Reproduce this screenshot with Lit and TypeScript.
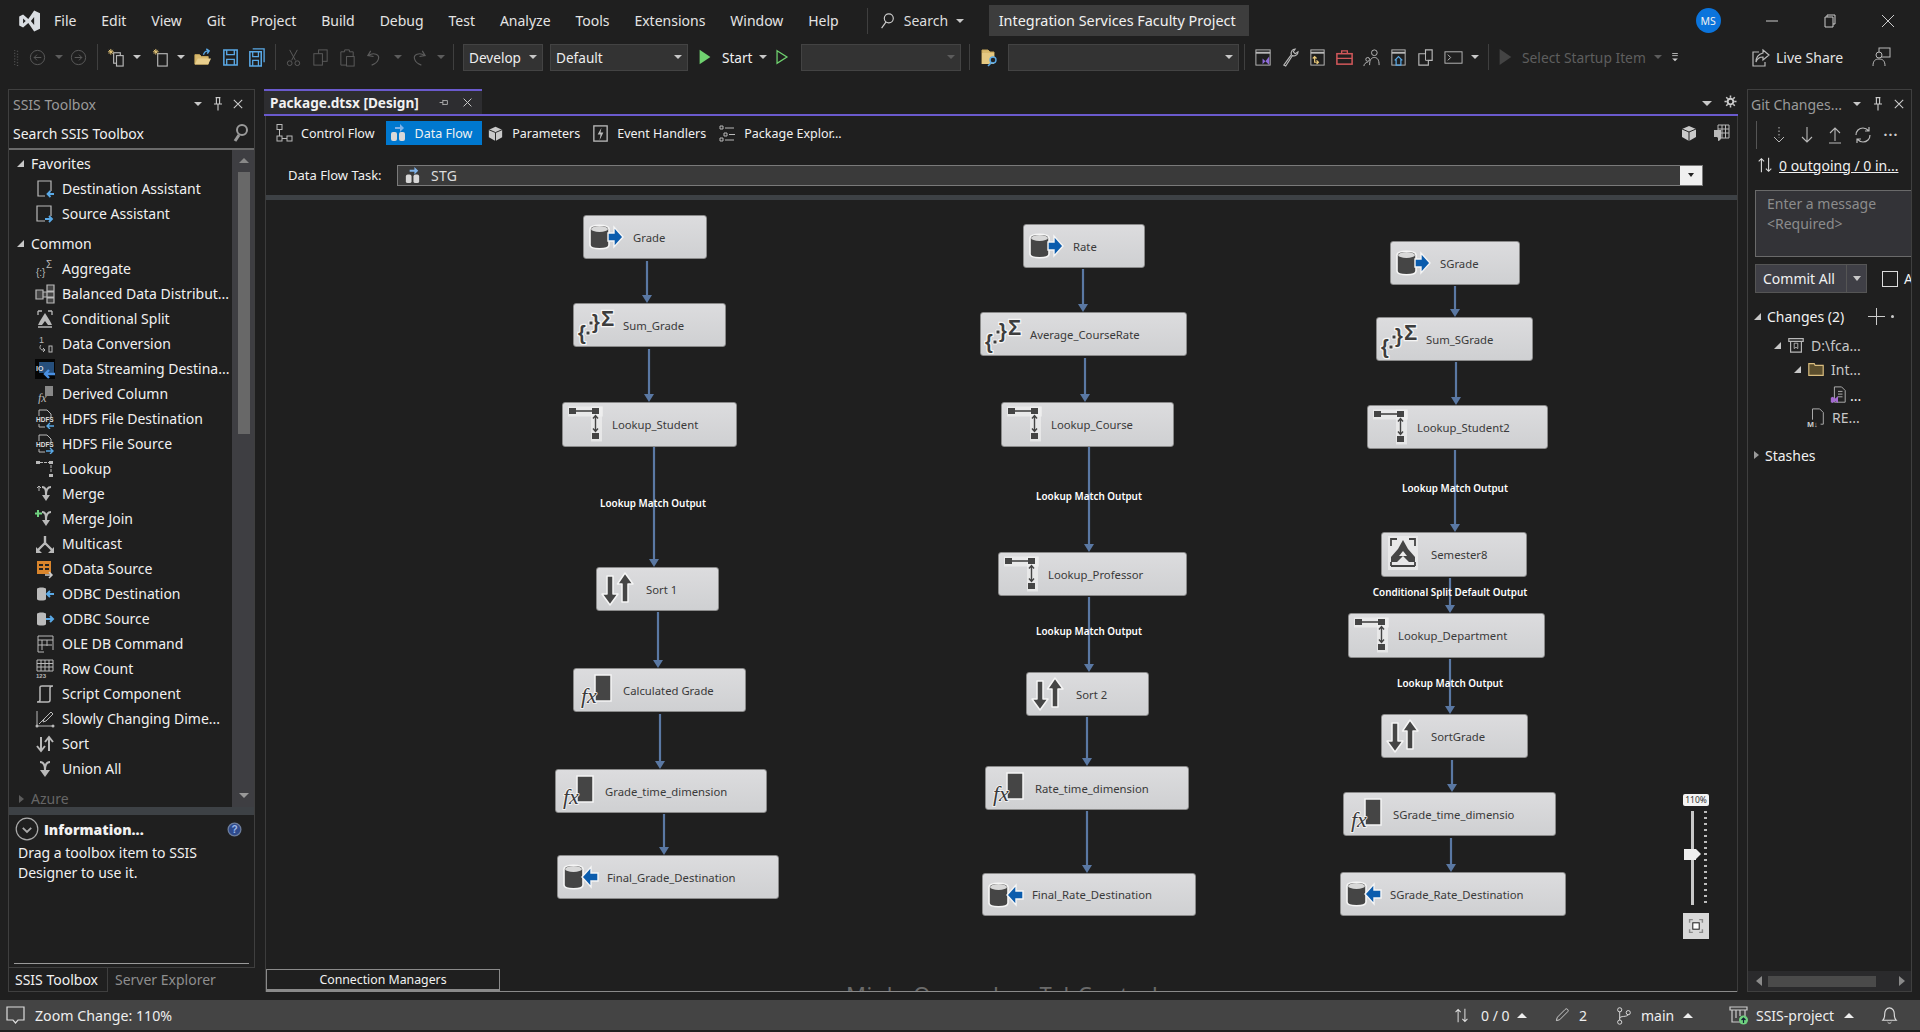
import { LitElement, html, css, svg } from 'lit';
import { customElement } from 'lit/decorators.js';

const G = '#b9b9b9';
const D = '#5c5c5c';
const BLUE = '#5aa9e6';

const icons: Record<string, any> = {
  grip: svg`<path d="M7 2v16M10 3v16" stroke="#555" stroke-width="1.4" stroke-dasharray="1 2" fill="none"/>`,
  back: svg`<circle cx="10" cy="10" r="7.5" fill="none" stroke="${D}"/><path d="M14 10H6.5M9.5 7l-3 3 3 3" fill="none" stroke="${D}"/>`,
  fwd: svg`<circle cx="10" cy="10" r="7.5" fill="none" stroke="${D}"/><path d="M6 10h7.5M10.5 7l3 3-3 3" fill="none" stroke="${D}"/>`,
  newproj: svg`<rect x="7" y="5" width="7" height="11" fill="none" stroke="${G}" stroke-width="1.2"/><rect x="10" y="8" width="7" height="11" fill="#222" stroke="${G}" stroke-width="1.2"/><path d="M4 1v6M1 4h6M2 2l4 4M6 2 2 6" stroke="#e8c878" stroke-width="1"/>`,
  newfile: svg`<rect x="6" y="6" width="10" height="13" fill="none" stroke="${G}" stroke-width="1.2"/><path d="M4 1v6M1 4h6M2 2l4 4M6 2 2 6" stroke="#e8c878" stroke-width="1"/>`,
  open: svg`<path d="M2 17V7h5l2 2h7v8z" fill="#d8b96e" stroke="#c9a95c"/><path d="M2 17l3-6h14l-3 6z" fill="#e9cf8d"/><path d="M11 7c1-3 3-4 5-4M14 1l3 2-2 3" fill="none" stroke="${BLUE}" stroke-width="1.5"/>`,
  save: svg`<path d="M3 2h14v16H3z" fill="none" stroke="${BLUE}" stroke-width="1.6"/><path d="M6 2v5h8V2M6 18v-6h8v6" fill="none" stroke="${BLUE}" stroke-width="1.4"/>`,
  saveall: svg`<path d="M6 1h12v14" fill="none" stroke="${BLUE}" stroke-width="1.4"/><path d="M3 4h12v15H3z" fill="none" stroke="${BLUE}" stroke-width="1.6"/><path d="M6 4v5h6V4M6 19v-6h6v6" fill="none" stroke="${BLUE}" stroke-width="1.3"/>`,
  cut: svg`<path d="M6 2l6 11M14 2 8 13" stroke="${D}" fill="none"/><circle cx="6" cy="16" r="2.5" fill="none" stroke="${D}"/><circle cx="14" cy="16" r="2.5" fill="none" stroke="${D}"/>`,
  copy: svg`<rect x="8" y="2" width="9" height="12" fill="none" stroke="${D}"/><rect x="3" y="6" width="9" height="12" fill="#1f1f1f" stroke="${D}"/>`,
  paste: svg`<path d="M3 4h4V2h5v2h4v5M3 4v14h6" fill="none" stroke="${D}"/><rect x="9" y="9" width="8" height="10" fill="none" stroke="${D}"/>`,
  undo: svg`<path d="M6 3 3 8l6 1M3.5 8C9 4 16 7 14 12c-1 3-4 5-7 6" fill="none" stroke="${D}" stroke-width="1.2"/>`,
  redo: svg`<path d="M14 3l3 5-6 1M16.500 8C11 4 4 7 6 12c1 3 4 5 7 6" fill="none" stroke="${D}" stroke-width="1.2"/>`,
  play: svg`<path d="M4 2l12 8-12 8z" fill="#6fd26f"/>`,
  playo: svg`<path d="M4.500 3l11 7-11 7z" fill="none" stroke="#6fd26f" stroke-width="1.4"/>`,
  playd: svg`<path d="M4 1l13 9-13 9z" fill="#444"/>`,
  findfolder: svg`<path d="M2 17V3h6l2 2h4v6" fill="#d8b96e" stroke="#c9a95c"/><rect x="2" y="6" width="12" height="11" fill="#e4c882"/><circle cx="13" cy="13" r="3" fill="#222" stroke="${BLUE}" stroke-width="1.4"/><path d="M11 16l-3 3" stroke="${BLUE}" stroke-width="1.6"/>`,
  win1: svg`<rect x="2" y="2" width="15" height="16" fill="none" stroke="${G}"/><path d="M2 5h15" stroke="${G}" stroke-width="2"/><path d="M9 11l3 3 4-5v9l-4-4-3 3z" fill="#8e6bd8"/>`,
  wrench: svg`<path d="M4 18 12 7c-1-3 1-6 4-6l-2 3 2 2 3-2c0 3-3 5-6 4l-7 11z" fill="none" stroke="${G}" stroke-width="1.2"/>`,
  win2: svg`<rect x="3" y="2" width="14" height="16" fill="none" stroke="${G}"/><path d="M3 5h14" stroke="${G}" stroke-width="2"/><path d="M7 9v6h4M5 11l2-2 2 2M9 13l2 2-2 2" fill="none" stroke="#e8c878" stroke-width="1.3"/>`,
  toolbox: svg`<rect x="2" y="6" width="16" height="11" fill="none" stroke="#d0575a" stroke-width="1.6"/><path d="M7 6V3h6v3M2 11h16" fill="none" stroke="#d0575a" stroke-width="1.4"/>`,
  person: svg`<circle cx="13" cy="5" r="3" fill="none" stroke="${G}"/><path d="M8 18c0-6 2-8 5-8s5 2 5 8" fill="none" stroke="${G}"/><circle cx="6" cy="12" r="2" fill="none" stroke="${G}"/><path d="M2 19c0-2 2-4 4-4" fill="none" stroke="${G}"/>`,
  win3: svg`<rect x="3" y="2" width="14" height="16" fill="none" stroke="${G}"/><path d="M3 5h14" stroke="${G}" stroke-width="2"/><path d="M6 13l4-4 4 4M7.500 12v6h5v-6" fill="none" stroke="${BLUE}" stroke-width="1.3"/>`,
  multi: svg`<path d="M10 2h7v11h-4v5H3V6h7z" fill="none" stroke="${G}" stroke-width="1.2"/><path d="M10 2v11h3" fill="none" stroke="${G}"/>`,
  term: svg`<rect x="1" y="4" width="18" height="12" fill="none" stroke="${G}"/><path d="M4 7l3 3-3 3" fill="none" stroke="${G}"/>`,
  overflow: svg`<path d="M6 5h8M6 8h8" stroke="#ccc" stroke-width="1.2"/><path d="M6 12h8l-4 4z" fill="#ccc"/>`,
  liveshare: svg`<path d="M13 3l6 5-6 5v-3c-4 0-6 2-7 5 0-5 3-8 7-9z" fill="none" stroke="${G}" stroke-width="1.2"/><path d="M9 5H3v14h12v-4" fill="none" stroke="${G}" stroke-width="1.2"/>`,
  feedback: svg`<rect x="8" y="1" width="11" height="9" fill="none" stroke="${G}"/><circle cx="8" cy="8" r="3" fill="#1f1f1f" stroke="${G}"/><path d="M2 19c0-5 2-7 6-7s6 2 6 7" fill="none" stroke="${G}"/>`,
  pin: svg`<path d="M7 2h6M8 2v8h4V2M5 10h10M10 10v8" fill="none" stroke="#ccc" stroke-width="1.4"/>`,
  pinh: svg`<path d="M4 10h5M9 6v8M9 7h7v6H9" fill="none" stroke="#bbb" stroke-width="1.3"/>`,
  x: svg`<path d="M4 4l12 12M16 4 4 16" stroke="#ccc" stroke-width="1.5"/>`,
  mag: svg`<circle cx="12" cy="7" r="5" fill="none" stroke="#9a9a9a" stroke-width="2"/><path d="M9 12l-4 6" stroke="#9a9a9a" stroke-width="3"/>`,
  searchi: svg`<circle cx="12" cy="7" r="5" fill="none" stroke="#ccc" stroke-width="1.3"/><path d="M9 11l-5 7" stroke="#ccc" stroke-width="1.3"/>`,
  gear: svg`<circle cx="10" cy="10" r="3.800" fill="none" stroke="#ccc" stroke-width="2.600"/><path d="M10 2v3M10 15v3M2 10h3M15 10h3M4.300 4.300l2 2M13.700 13.700l2 2M15.700 4.300l-2 2M6.300 13.700l-2 2" stroke="#ccc" stroke-width="2"/>`,
  cflow: svg`<rect x="3" y="1.500" width="5" height="5" fill="none" stroke="${G}"/><rect x="3" y="13" width="5" height="5" fill="none" stroke="${G}"/><rect x="13" y="13" width="5" height="5" fill="none" stroke="${G}"/><path d="M5.500 7v6M8 15.500h5" stroke="${G}"/>`,
  dflow: svg`<rect x="3" y="9" width="6" height="9" rx="2" fill="#d8d8d8"/><rect x="11" y="9" width="6" height="9" rx="2" fill="#d8d8d8"/><path d="M7 6h5V3l4 4-4 4V8H7z" fill="#7fb2e8" transform="translate(0 -2)"/>`,
  params: svg`<path d="M10 3l7 3v8l-7 4-7-4V6z" fill="#c9c9c9"/><path d="M3 6l7 3 7-3M10 9v9" fill="none" stroke="#222"/>`,
  ehandler: svg`<rect x="3" y="2" width="14" height="16" fill="none" stroke="${G}" stroke-width="1.4"/><path d="M11 4 7 11h3l-1 6 4-8h-3z" fill="${G}"/>`,
  pexplore: svg`<path d="M3 3h3v3H3zM8 5h9M7 10h3v3H7zM12 11.500h6M3 15h3v3H3zM8 17h9" stroke="${G}" fill="none"/>`,
  gridf: svg`<path d="M7 2h11v13H7zM7 6h11M7 10h11M11 2v13M14.500 2v13" fill="none" stroke="${G}"/><path d="M3 7h7v8c0 2-2 3-3 3v-4H3z" fill="${G}"/>`,
  fetch: svg`<path d="M10 2v11" stroke="${G}" stroke-dasharray="1.500 2"/><path d="M5 12l5 5 5-5" fill="none" stroke="${G}"/>`,
  pull: svg`<path d="M10 2v15M5 12l5 5 5-5" fill="none" stroke="${G}" stroke-width="1.100"/>`,
  push: svg`<path d="M10 16V3M5 8l5-5 5 5M4 18h12" fill="none" stroke="${G}" stroke-width="1.100"/>`,
  sync: svg`<path d="M3 10c0-4 3-7 7-7 2 0 4 1 6 3M17 10c0 4-3 7-7 7-2 0-4-1-6-3M16 2v4h-4M4 18v-4h4" fill="none" stroke="${G}" stroke-width="1.200"/>`,
  arrows: svg`<path d="M6 18V3M3 6l3-3 3 3M14 2v15M11 14l3 3 3-3" fill="none" stroke="#ddd" stroke-width="1.200"/>`,
  repo: svg`<path d="M2 3h16v3H2zM4 6v12h12V6" fill="none" stroke="${G}" stroke-width="1.300"/><path d="M8 8h4v6l-2-1.500L8 14z" fill="none" stroke="${G}"/>`,
  folder: svg`<path d="M2 17V4h6l1 2h9v11z" fill="#5b4e2d" stroke="#d9bd7f" stroke-width="1.300"/>`,
  vsfile: svg`<path d="M6 1h8l4 4v13H6z" fill="#222" stroke="${G}"/><path d="M10 6h5M10 9h5M10 12h5" stroke="${G}"/><path d="M2 13l2-1 3 2 3-3v8l-3-2-3 2-2-1z" fill="#a36bd0"/>`,
  mdfile: svg`<path d="M5 13V1h8l4 4v13h-3" fill="none" stroke="${G}"/>`,
  comment: svg`<path d="M2 2h17v13h-6l-2.500 3L8 15H2z" fill="none" stroke="#ddd" stroke-width="1.200"/>`,
  pencil: svg`<path d="M3 17l1-4L14 3c1-1 2-1 3 0s1 2 0 3L7 16z" fill="none" stroke="#ddd" stroke-width="1.100"/>`,
  branch: svg`<circle cx="6" cy="4" r="2.200" fill="none" stroke="#ddd"/><circle cx="6" cy="17" r="2.200" fill="none" stroke="#ddd"/><circle cx="15" cy="7" r="2.200" fill="none" stroke="#ddd"/><path d="M6 6v9M6 13c0-3 8-1 9-4" fill="none" stroke="#ddd"/>`,
  repoup: svg`<path d="M1 2h17v3H1zM3 5v12h9M16 5v6M7 5v8M11 5v6" fill="none" stroke="#ccc" stroke-width="1.200"/><circle cx="14.500" cy="15" r="4.500" fill="#6fd27f"/><path d="M14.500 18v-5M12.500 15l2-2 2 2" fill="none" stroke="#123" stroke-width="1.200"/>`,
  bell: svg`<path d="M3 15c2-2 2-4 2-7 0-3 2-6 5-6s5 3 5 6c0 3 0 5 2 7z" fill="none" stroke="#ddd" stroke-width="1.200"/><path d="M8 17c1 1.500 3 1.500 4 0" fill="none" stroke="#ddd"/>`,
  info: svg`<circle cx="10" cy="10" r="7.500" fill="#2e4a8c" stroke="#6c7d9c" stroke-width="1.500"/><text x="10" y="14.500" font-size="12" font-weight="700" text-anchor="middle" fill="#9db8e8" font-family="Liberation Sans">?</text>`,
  chevcircle: svg`<circle cx="10" cy="10" r="9" fill="none" stroke="#aaa" stroke-width="1"/><path d="M6.500 9l3.500 3.500L13.500 9" fill="none" stroke="#aaa" stroke-width="1.500"/>`,
  vslogo: svg`<path d="M4 6.500 7 5l4 3.500L15.500 2 20 4v12l-4.500 2L11 11.500 7 15l-3-1.500zM7 8v4l2-2zM15.500 7 13 10l2.500 3z" fill="#d9dde2" fill-rule="evenodd"/>`,
  fit: svg`<path d="M2 6V2h4M14 2h4v4M18 14v4h-4M6 18H2v-4" fill="none" stroke="#8a8a8a" stroke-width="1.800"/><rect x="6" y="6" width="8" height="8" fill="#fff" stroke="#222" stroke-width="1.300"/>`,
  // toolbox
  tDest: svg`<path d="M10 17H3V2h13v10" fill="none" stroke="${G}" stroke-width="1.200"/><path d="M19 15h-6M15.500 12l-3 3 3 3" fill="none" stroke="${BLUE}" stroke-width="1.800"/>`,
  tSrc: svg`<path d="M10 17H2V2h14v10" fill="none" stroke="${G}" stroke-width="1.200"/><path d="M10 15h7M14 12l3 3-3 3" fill="none" stroke="${BLUE}" stroke-width="1.800"/>`,
  tAgg: svg`<text x="1" y="17" font-size="10" fill="${G}" font-family="Liberation Sans">{:}</text><text x="11" y="9" font-size="10" fill="${G}" font-family="Liberation Sans">Σ</text>`,
  tBal: svg`<path d="M1 6h7v9H1zM8 8h4v5H8zM12 1h7v6h-7zM12 8h7v5h-7zM12 14h7v5h-7z" fill="#444" stroke="${G}" stroke-width="1.200"/>`,
  tSplit: svg`<path d="M3 2h4M13 2h4M3 2v4M17 2v4M3 18h14" fill="none" stroke="${G}" stroke-width="1.300"/><path d="M10 4l5 8 2 4h-4l-3-4-3 4H3l2-4z" fill="${G}"/>`,
  tConv: svg`<text x="4" y="9" font-size="9" fill="${G}" font-family="Liberation Sans">1</text><path d="M6 11c-2 2-1 5 2 5h2M8 14l2 2-2 2" fill="none" stroke="${G}"/><rect x="14" y="12" width="3" height="6" fill="none" stroke="${G}"/>`,
  tStream: svg`<rect width="20" height="20" fill="#050505"/><rect x="4" y="3" width="15" height="11" fill="#264f7c"/><text x="1" y="12" font-size="7" font-weight="700" fill="#ddd" font-family="Liberation Sans">IO</text><path d="M20 15h-9M14 11l-4 4 4 4" fill="none" stroke="#4a90e2" stroke-width="2.400"/>`,
  tDer: svg`<rect x="10" y="2" width="8" height="10" fill="#888"/><text x="3" y="18" font-size="12" font-style="italic" fill="${G}" font-family="Liberation Serif">fx</text>`,
  tHdfsD: svg`<path d="M4 7V1h8l4 4v3" fill="none" stroke="${G}"/><text x="1" y="13" font-size="6.500" font-weight="700" fill="#ddd" font-family="Liberation Sans">HDFS</text><path d="M4 15v3h6" fill="none" stroke="${G}"/><path d="M19 17h-7M15 14l-3 3 3 3" fill="none" stroke="${BLUE}" stroke-width="1.400"/>`,
  tHdfsS: svg`<path d="M4 7V1h8l4 4v3" fill="none" stroke="${G}"/><text x="1" y="13" font-size="6.500" font-weight="700" fill="#ddd" font-family="Liberation Sans">HDFS</text><path d="M4 15v3h6" fill="none" stroke="${G}"/><path d="M11 17h7M15 14l3 3-3 3" fill="none" stroke="${BLUE}" stroke-width="1.400"/>`,
  tLook: svg`<rect x="1" y="2" width="4" height="3" fill="${G}"/><rect x="14" y="2" width="4" height="3" fill="${G}"/><path d="M5 3.500h9M16 6v8" stroke="${G}" stroke-dasharray="3 1"/><rect x="14" y="15" width="4" height="3" fill="${G}"/>`,
  tMerge: svg`<path d="M3 2v5M5 4l-2-2-2 2" transform="translate(1 0)" fill="none" stroke="${G}"/><path d="M7 3c4 0 4 4 4 8M16 3c-4 0-5 4-5 8" fill="none" stroke="${G}" stroke-width="2"/><path d="M7 11h8l-4 6z" fill="${G}"/>`,
  tJoin: svg`<path d="M3 1v7M0 4.500h7" stroke="#6fd27f" stroke-width="2"/><path d="M7 3c4 0 4 4 4 8M16 3c-4 0-5 4-5 8" fill="none" stroke="${G}" stroke-width="2"/><path d="M7 11h8l-4 6z" fill="${G}"/>`,
  tMulti: svg`<path d="M10 2v9M10 9 3 16M10 9l7 7" fill="none" stroke="${G}" stroke-width="2.400"/><path d="M1 13v6h6zM19 13v6h-6z" fill="${G}"/>`,
  tOData: svg`<path d="M2 2h14v13H2z" fill="#d9852c"/><path d="M4 5h4v2H4zM10 5h4v2h-4zM4 9h4v2H4zM10 9h4v2h-4z" fill="#222"/><path d="M10 16h7M14 13l3 3-3 3" fill="none" stroke="#ccc" stroke-width="1.500"/>`,
  tOdbcD: svg`<path d="M2 5c0-2 9-2 9 0v10c0 2-9 2-9 0z" fill="#bbb"/><path d="M19 10h-7M15 7l-3 3 3 3" fill="none" stroke="${BLUE}" stroke-width="2"/>`,
  tOdbcS: svg`<path d="M2 5c0-2 9-2 9 0v10c0 2-9 2-9 0z" fill="#bbb"/><path d="M11 10h7M15 7l3 3-3 3" fill="none" stroke="${BLUE}" stroke-width="2"/>`,
  tOle: svg`<path d="M3 2h15v14M3 2v16h6M3 6h15M7 6v10M12 6v6M3 11h14" fill="none" stroke="${G}"/>`,
  tRow: svg`<path d="M2 1h16v11H2zM2 4.500h16M2 8h16M6 1v11M10 1v11M14 1v11" fill="none" stroke="${G}"/><text x="1" y="19" font-size="6" font-weight="700" fill="${G}" font-family="Liberation Sans">123</text>`,
  tScript: svg`<path d="M5 16V3c0-1 1-1 2-1h11c-2 0-3 1-3 2v12c0 1-1 2-2 2H2c2 0 3-1 3-2z" fill="none" stroke="${G}" stroke-width="1.500"/>`,
  tScd: svg`<path d="M2 2v15h16" fill="none" stroke="${G}"/><circle cx="2" cy="17" r="1.500" fill="${G}"/><circle cx="18" cy="17" r="1.500" fill="${G}"/><path d="M4 15l5-5M9 10l7-7 2 2-7 7-3 1z" fill="none" stroke="${G}"/>`,
  tSort: svg`<path d="M6 3v13M2 12l4 5 4-5M14 17V4M10 8l4-5 4 5" fill="none" stroke="${G}" stroke-width="2"/>`,
  tUnion: svg`<path d="M5 3c4 0 5 4 5 8M15 3c-4 0-5 4-5 8" fill="none" stroke="${G}" stroke-width="2"/><path d="M5 11h10l-5 7z" fill="${G}"/>`,
  // designer nodes, drawn on a 40 box
  nSrc: svg`<path d="M3 12c0-5 19-5 19 0v16c0 5-19 5-19 0z" fill="#454545" stroke="#f5f5f5" stroke-width="1.600"/><ellipse cx="12.500" cy="12" rx="8.500" ry="3" fill="#d8d8d8"/><path d="M21 16h6v-6l9 10-9 10v-6h-6z" fill="#0b5cad" stroke="#f5f5f5" stroke-width="1.400"/>`,
  nDst: svg`<path d="M3 12c0-5 19-5 19 0v16c0 5-19 5-19 0z" fill="#454545" stroke="#f5f5f5" stroke-width="1.600"/><ellipse cx="12.500" cy="12" rx="8.500" ry="3" fill="#d8d8d8"/><path d="M37 16h-7v-6l-9 10 9 10v-6h7z" fill="#0b5cad" stroke="#f5f5f5" stroke-width="1.400"/>`,
  nAgg: svg`<g font-family="Liberation Sans" fill="#3d3d3d" stroke="#f5f5f5" stroke-width="2.400" paint-order="stroke"><text x="24" y="21" font-size="22" font-weight="700">Σ</text><text x="15" y="24" font-size="20" font-weight="700">}</text><text x="1" y="35" font-size="20" font-weight="700">{</text></g><path d="M12 16h4v4h-4zM9 26h4v4H9z" fill="#3d3d3d" stroke="#f5f5f5"/>`,
  nLook: svg`<rect x="2" y="2.500" width="35" height="10" fill="#f0f0f0" opacity=".7"/><rect x="25" y="2.500" width="11" height="35" fill="#f0f0f0" opacity=".7"/><rect x="3" y="4" width="7" height="6" fill="#444"/><rect x="26" y="4" width="7" height="6" fill="#444"/><rect x="26" y="29" width="7" height="6" fill="#444"/><path d="M10 7h16" stroke="#444" stroke-width="1.600"/><path d="M29.500 12v15M27 14.500l2.500-3 2.500 3M27 24.500l2.500 3 2.500-3" fill="none" stroke="#444" stroke-width="1.400"/>`,
  nSort: svg`<g stroke="#f5f5f5" stroke-width="1.500" fill="#454545" stroke-linejoin="round"><path d="M7 7h6v18h5l-8 11-8-11h5z"/><path d="M25 33h-6V15h-4.500L22 4l8 11h-5z" transform="translate(3 0)"/></g>`,
  nFx: svg`<rect x="18" y="5" width="16" height="26" fill="#454545" stroke="#f5f5f5" stroke-width="1.500"/><text x="4" y="33" font-size="22" font-style="italic" fill="#3a3a3a" stroke="#f5f5f5" stroke-width="1.600" paint-order="stroke" font-family="Liberation Serif">fx</text>`,
  nSplit: svg`<rect x="3" y="2" width="30" height="34" fill="#f0f0f0" opacity=".7"/><path d="M6 12V5h6M30 12V5h-6M6 32h24M6 28v4M30 28v4" fill="none" stroke="#444" stroke-width="1.800"/><path d="M18 6l5 9 7 8v5h-6l-6-6-6 6H6v-5l7-8z" fill="#454545"/><path d="M18 17l-4 5h8z" fill="#eee"/>`,
};

const ic = (name: string, size = 18) =>
  html`<svg class="ic" width=${size} height=${size} viewBox="0 0 20 20">${icons[name]}</svg>`;

const menu = ['File', 'Edit', 'View', 'Git', 'Project', 'Build', 'Debug', 'Test', 'Analyze', 'Tools', 'Extensions', 'Window', 'Help'];

// toolbar slots: [icon, slot width]
const tbA: [string, number][] = [
  ['grip', 14], ['back', 26], ['^', 18], ['fwd', 20], ['|', 18], ['newproj', 20], ['^w', 22], ['newfile', 26], ['^w', 14],
  ['open', 28], ['save', 28], ['saveall', 24], ['|', 14], ['cut', 22], ['copy', 32], ['paste', 22], ['undo', 32], ['^', 16],
  ['redo', 24], ['^', 22], ['|', 3],
];
const tbB: [string, number][] = [
  ['win1', 26], ['wrench', 27], ['win2', 28], ['toolbox', 27], ['person', 26], ['win3', 28], ['multi', 26], ['term', 30], ['^w', 13],
];

type Row = { icon?: string; label: string; head?: boolean; dim?: boolean; gap?: boolean };
const toolbox: Row[] = [
  { label: 'Favorites', head: true },
  { icon: 'tDest', label: 'Destination Assistant' },
  { icon: 'tSrc', label: 'Source Assistant' },
  { label: 'Common', head: true, gap: true },
  { icon: 'tAgg', label: 'Aggregate' },
  { icon: 'tBal', label: 'Balanced Data Distribut...' },
  { icon: 'tSplit', label: 'Conditional Split' },
  { icon: 'tConv', label: 'Data Conversion' },
  { icon: 'tStream', label: 'Data Streaming Destina...' },
  { icon: 'tDer', label: 'Derived Column' },
  { icon: 'tHdfsD', label: 'HDFS File Destination' },
  { icon: 'tHdfsS', label: 'HDFS File Source' },
  { icon: 'tLook', label: 'Lookup' },
  { icon: 'tMerge', label: 'Merge' },
  { icon: 'tJoin', label: 'Merge Join' },
  { icon: 'tMulti', label: 'Multicast' },
  { icon: 'tOData', label: 'OData Source' },
  { icon: 'tOdbcD', label: 'ODBC Destination' },
  { icon: 'tOdbcS', label: 'ODBC Source' },
  { icon: 'tOle', label: 'OLE DB Command' },
  { icon: 'tRow', label: 'Row Count' },
  { icon: 'tScript', label: 'Script Component' },
  { icon: 'tScd', label: 'Slowly Changing Dime...' },
  { icon: 'tSort', label: 'Sort' },
  { icon: 'tUnion', label: 'Union All' },
  { label: 'Azure', head: true, dim: true, gap: true },
];

// canvas origin on the page is 266,200
const OX = 266;
const OY = 200;
const nodes: [string, string, number, number, number, number][] = [
  ['Grade', 'nSrc', 583, 215, 707, 259],
  ['Sum_Grade', 'nAgg', 573, 303, 726, 347],
  ['Lookup_Student', 'nLook', 562, 402, 737, 447],
  ['Sort 1', 'nSort', 596, 567, 719, 611],
  ['Calculated Grade', 'nFx', 573, 668, 746, 712],
  ['Grade_time_dimension', 'nFx', 555, 769, 767, 813],
  ['Final_Grade_Destination', 'nDst', 557, 855, 779, 899],
  ['Rate', 'nSrc', 1023, 224, 1145, 268],
  ['Average_CourseRate', 'nAgg', 980, 312, 1187, 356],
  ['Lookup_Course', 'nLook', 1001, 402, 1174, 447],
  ['Lookup_Professor', 'nLook', 998, 552, 1187, 596],
  ['Sort 2', 'nSort', 1026, 672, 1149, 716],
  ['Rate_time_dimension', 'nFx', 985, 766, 1189, 810],
  ['Final_Rate_Destination', 'nDst', 982, 873, 1196, 916],
  ['SGrade', 'nSrc', 1390, 241, 1520, 285],
  ['Sum_SGrade', 'nAgg', 1376, 317, 1533, 361],
  ['Lookup_Student2', 'nLook', 1367, 405, 1548, 449],
  ['Semester8', 'nSplit', 1381, 532, 1527, 577],
  ['Lookup_Department', 'nLook', 1348, 613, 1545, 658],
  ['SortGrade', 'nSort', 1381, 714, 1528, 758],
  ['SGrade_time_dimensio', 'nFx', 1343, 792, 1556, 836],
  ['SGrade_Rate_Destination', 'nDst', 1340, 872, 1566, 916],
];
const links: [number, number, number][] = [
  [647, 261, 303], [649, 349, 402], [654, 447, 567], [658, 612, 668], [660, 714, 769], [664, 814, 855],
  [1083, 269, 312], [1085, 358, 402], [1089, 447, 552], [1089, 597, 672], [1087, 717, 766], [1087, 811, 873],
  [1455, 286, 317], [1456, 362, 405], [1455, 450, 532], [1450, 578, 613], [1450, 659, 714], [1452, 760, 792], [1451, 838, 872],
];
const labels: [string, number, number][] = [
  ['Lookup Match Output', 653, 503],
  ['Lookup Match Output', 1089, 496],
  ['Lookup Match Output', 1089, 631],
  ['Lookup Match Output', 1455, 488],
  ['Conditional Split Default Output', 1450, 592],
  ['Lookup Match Output', 1450, 683],
];

@customElement('app-root')
export class AppRoot extends LitElement {
  static styles = css`
    :host {
      display: block;
      width: 1920px;
      height: 1032px;
      overflow: hidden;
      background: #1f1f1f;
      color: #f1f1f1;
      font-family: 'Noto Sans', 'Open Sans', sans-serif;
      font-size: 14px;
    }
    .ic { display: block; flex: none; }
    .app { display: flex; flex-direction: column; height: 1032px; }

    /* title bar */
    .title { height: 41px; display: flex; align-items: center; flex: none; }
    .logo { width: 54px; display: flex; justify-content: center; }
    .menu { display: flex; gap: 24.9px; color: #e4e4e4; }
    .vsep { width: 1px; height: 26px; background: #3f3f3f; margin: 0 10px 0 28px; }
    .search { display: flex; align-items: center; gap: 8px; color: #ddd; width: 111px; flex: none; white-space: nowrap; }
    .caret { width: 0; height: 0; border: 4px solid transparent; border-top: 4px solid #c8c8c8; border-bottom: 0; flex: none; }
    .project { width: 240px; height: 31px; padding: 0 10px; background: #3d3d3d; display: flex; align-items: center; white-space: nowrap; font-size: 14.4px; flex: none; }
    .avatar { width: 25px; height: 25px; border-radius: 50%; background: #0b74dc; font-size: 10.5px; display: flex; align-items: center; justify-content: center; margin-left: 447px; flex: none; }
    .wbtn { width: 58px; display: flex; justify-content: center; flex: none; }
    .wbtn.first { margin-left: 22px; }

    /* toolbar */
    .tools { height: 32px; display: flex; align-items: center; padding-left: 10px; flex: none; }
    .slot { display: flex; align-items: center; justify-content: center; flex: none; height: 100%; }
    .tsep { width: 1px; height: 26px; background: #3f3f3f; }
    .caret.dim { border-top-color: #5c5c5c; }
    .combo { height: 27px; background: #333; border: 1px solid #434343; box-sizing: border-box; display: flex; align-items: center; padding: 0 5px; flex: none; white-space: nowrap; color: #eee; font-size: 13.6px; }
    .combo .caret { margin-left: auto; }
    .w80 { width: 80px; } .w138 { width: 138px; } .w160 { width: 160px; } .w231 { width: 231px; }
    .sp8 { width: 8px; flex: none; } .sp7 { width: 7px; flex: none; } .sp5 { width: 5px; flex: none; }
    .starttxt { width: 36px; flex: none; font-size: 13.6px; }
    .startup { color: #5e5e5e; width: 126px; flex: none; white-space: nowrap; margin-left: 8px; font-size: 13.8px; }
    .lsh { color: #e4e4e4; width: 119px; margin-left: 12px; display: flex; gap: 6px; align-items: center; white-space: nowrap; flex: none; }

    /* main */
    .main { height: 903px; margin-top: 16px; padding-left: 8px; display: flex; gap: 9px; flex: none; }
    .panel { width: 247px; display: flex; flex-direction: column; flex: none; }
    .box { height: 879px; border: 1px solid #3f3f3f; box-sizing: border-box; display: flex; flex-direction: column; }
    .phead { height: 28px; display: flex; align-items: center; padding-left: 4px; color: #9a9a9a; flex: none; }
    .phead .ttl { width: 175px; white-space: nowrap; }
    .phead .slot { width: 20px; }
    .psearch { height: 30px; display: flex; align-items: center; justify-content: space-between; padding: 0 4px; flex: none; }
    .pdiv { height: 2px; background: #6a6a6a; flex: none; }
    .listwrap { flex: 1; min-height: 0; display: flex; overflow: hidden; }
    .list { width: 223px; flex: none; padding-top: 1px; }
    .row { height: 25px; display: flex; align-items: center; white-space: nowrap; }
    .row.head { padding-left: 8px; gap: 7px; }
    .row.gap { margin-top: 5px; }
    .row.item { padding-left: 26px; gap: 7px; }
    .row.dim { color: #666; }
    .tri { width: 0; height: 0; border-style: solid; border-width: 0 0 7px 7px; border-color: transparent transparent #c8c8c8 transparent; flex: none; }
    .tri.right { border-width: 4px 0 4px 5px; border-color: transparent transparent transparent #5c5c5c; margin-left: 2px; }
    .tri.open { border-width: 4px 0 4px 5px; border-color: transparent transparent transparent #999; }
    .vbar { width: 23px; background: #3e3e42; display: flex; flex-direction: column; align-items: center; flex: none; }
    .up { width: 0; height: 0; border: 5px solid transparent; border-bottom: 5px solid #888; border-top: 0; margin: 8px 0 9px; }
    .thumb { width: 12px; height: 262px; background: #686868; }
    .vbar .down { width: 0; height: 0; border: 5px solid transparent; border-top: 5px solid #999; border-bottom: 0; margin-top: auto; margin-bottom: 9px; }
    .hsplit { height: 8px; background: #3d4145; flex: none; }
    .info { height: 152px; flex: none; display: flex; flex-direction: column; padding: 0 5px; box-sizing: border-box; }
    .infohead { height: 28px; display: flex; align-items: center; gap: 5px; padding-left: 1px; font-weight: 800; font-family: 'Open Sans', sans-serif; font-size: 14px; flex: none; }
    .infohead .help { margin-left: auto; margin-right: 6px; font-weight: 400; }
    .infotxt { padding-left: 4px; line-height: 20px; }
    .inforule { margin-top: auto; height: 1px; background: #9a9a9a; margin-bottom: 3px; }
    .ptabs { height: 24px; display: flex; align-items: center; flex: none; }
    .ptab { height: 24px; box-sizing: border-box; border: 1px solid #3f3f3f; border-top: 0; width: 100px; padding-left: 6px; line-height: 23px; white-space: nowrap; }
    .ptab.off { border: 0; color: #8e8e8e; width: auto; padding-left: 7px; }

    /* document */
    .doc { width: 1473px; display: flex; flex-direction: column; flex: none; margin-left: 1px; }
    .tabs { height: 27px; display: flex; align-items: stretch; border-bottom: 2px solid #6a5acd; box-sizing: border-box; flex: none; margin-left: -1px; }
    .tab { width: 218px; border-top: 2px solid #6a5acd; background: #2d2d30; box-sizing: border-box; display: flex; align-items: center; padding-left: 6px; font-weight: 700; font-size: 13.6px; white-space: nowrap; }
    .tab .name { width: 161px; }
    .tab .slot { width: 24px; }
    .tabs .right { margin-left: auto; display: flex; align-items: center; gap: 11px; }
    .tabs .right .caret { border-width: 5px 5px 0; margin-top: 3px; }
    .dbody { flex: 1; min-height: 0; border: 1px solid #3c3c3c; border-width: 0 1px; display: flex; flex-direction: column; }
    .dtabs { height: 30px; display: flex; align-items: center; padding: 4px 0 0 6px; flex: none; box-sizing: border-box; font-size: 12.5px; }
    .dtab { height: 24px; display: flex; align-items: center; gap: 7px; white-space: nowrap; padding: 0 6px 0 2px; }
    .dtab.on { background: #0078cf; padding-right: 10px; margin-left: 5px; }
    .m2 { margin-left: 2px; } .m3 { margin-left: 3px; }
    .dtabs .end { margin-left: auto; display: flex; gap: 12px; padding-right: 6px; }
    .task { height: 49px; display: flex; align-items: center; padding: 9px 0 0 22px; flex: none; box-sizing: border-box; font-size: 13px; }
    .task .lab { width: 109px; white-space: nowrap; }
    .taskbox { width: 1306px; height: 21px; background: #3a3a3a; border: 1px solid #7a7a7a; box-sizing: border-box; display: flex; align-items: center; padding-left: 5px; gap: 9px; color: #ddd; font-size: 14px; letter-spacing: .3px; }
    .taskbtn { margin-left: auto; width: 22px; height: 19px; background: #f0f0f0; display: flex; align-items: center; justify-content: center; }
    .taskbtn .caret { border-top-color: #222; border-width: 4px 3px 0; }
    .vsplit { height: 5px; background: #3d4145; flex: none; }
    .canvas { height: 760px; position: relative; overflow: hidden; flex: none; }
    .wires { position: absolute; inset: 0; }
    .node { position: absolute; box-sizing: border-box; border: 1px solid #8a8a8a; border-radius: 3px; background: linear-gradient(#dcdcde, #cfd0d2); color: #3a3a3a; display: flex; align-items: center; padding-left: 49px; font-size: 11.3px; white-space: nowrap; }
    .node svg { position: absolute; left: 3px; top: 1px; }
    .wlabel { position: absolute; transform: translate(-50%, -50%); font-size: 9.9px; font-weight: 600; color: #fff; white-space: nowrap; }
    .zoombox { position: absolute; left: 1417px; top: 594px; width: 26px; }
    .zlab { height: 12px; background: #f4f4f4; border-radius: 2px; color: #333; font-size: 8.5px; line-height: 12px; text-align: center; }
    .zslide { height: 94px; margin-top: 5px; position: relative; }
    .ztrack { position: absolute; left: 8px; width: 3px; top: 0; bottom: 0; background: #c8c8c8; }
    .zticks { position: absolute; left: 21px; width: 3px; top: 0; bottom: 0; background: repeating-linear-gradient(#bbb 0 2px, transparent 2px 6px); }
    .zthumb { position: absolute; left: 1px; top: 38px; width: 12px; height: 11px; background: #efefef; }
    .zthumb::after { content: ''; position: absolute; left: 12px; top: 0; border-left: 5px solid #efefef; border-top: 5.500px solid transparent; border-bottom: 5.500px solid transparent; }
    .zfit { width: 26px; height: 26px; margin-top: 8px; background: #d8d8d8; display: flex; align-items: center; justify-content: center; }
    .conn { flex: 1; min-height: 0; position: relative; overflow: hidden; border-bottom: 1px solid #8a8a8a; margin-top: 7px; }
    .conn .ghost { position: absolute; left: 580px; top: 12px; font-size: 22px; letter-spacing: .6px; color: #6a6a6a; white-space: nowrap; }
    .conntab { position: absolute; left: 0; top: 2px; width: 234px; height: 22px; box-sizing: border-box; border: 1px solid #8a8a8a; border-bottom-width: 2px; background: #1f1f1f; text-align: center; line-height: 20px; font-size: 12.300px; }

    /* git */
    .git { width: 165px; height: 903px; border: 1px solid #3f3f3f; box-sizing: border-box; display: flex; flex-direction: column; overflow: hidden; flex: none; }
    .git .phead { padding-left: 3px; }
    .git .phead .ttl { width: 95px; }
    .git .phead .slot { width: 21px; }
    .gtools { height: 34px; display: flex; align-items: center; margin-left: 8px; flex: none; }
    .gbar { width: 1px; height: 28px; background: #555; margin-right: 8px; }
    .gtools .slot { width: 28px; }
    .dots { color: #ccc; font-weight: 700; letter-spacing: 1px; line-height: 1; }
    .gout { height: 26px; display: flex; align-items: center; gap: 5px; padding-left: 8px; white-space: nowrap; flex: none; }
    .gout span { text-decoration: underline; }
    .msg { width: 170px; height: 67px; margin: 12px 0 0 7px; box-sizing: border-box; background: #333337; border: 1px solid #6a6a6a; padding: 3px 11px; color: #8c8c8c; line-height: 20px; flex: none; white-space: nowrap; }
    .commitrow { display: flex; align-items: center; margin: 7px 0 0 7px; flex: none; }
    .commit { width: 112px; height: 29px; background: #3f3f46; border: 1px solid #555; box-sizing: border-box; display: flex; align-items: center; padding-left: 7px; white-space: nowrap; flex: none; }
    .commit .div { width: 1px; align-self: stretch; background: #555; margin-left: auto; margin-right: 6px; }
    .commit .caret { border-width: 5px 4.500px 0; margin-right: 5px; }
    .check { width: 16px; height: 16px; box-sizing: border-box; border: 1px solid #ddd; margin: 0 6px 0 15px; flex: none; }
    .tree { height: 24px; display: flex; align-items: center; gap: 6px; white-space: nowrap; flex: none; }
    .t0 { padding-left: 6px; margin-top: 11px; }
    .t1 { padding-left: 26px; margin-top: 5px; }
    .t2 { padding-left: 46px; margin-top: 0; }
    .t3 { padding-left: 81px; margin-top: 2px; gap: 3px; }
    .t4 { padding-left: 60px; margin-top: -2px; }
    .stash { margin-top: 14px; }
    .add { margin-left: 18px; display: flex; align-items: center; gap: 6px; }
    .plus { width: 17px; height: 17px; background: linear-gradient(#ccc,#ccc) center/100% 1px no-repeat, linear-gradient(#ccc,#ccc) center/1px 100% no-repeat; }
    .dot { width: 3px; height: 3px; border-radius: 50%; background: #ccc; }
    .soft { color: #c8c8c8; }
    .mdw { position: relative; }
    .mdw b { position: absolute; left: -1px; bottom: -3px; font-size: 7.500px; font-weight: 700; color: #ccc; }
    .hbar { margin-top: auto; height: 20px; background: #2a2a2c; display: flex; align-items: center; flex: none; }
    .hl { border-top: 5px solid transparent; border-bottom: 5px solid transparent; border-right: 6px solid #8a8a8a; margin-left: 8px; }
    .hth { width: 108px; height: 11px; background: #4a4a4a; margin-left: 6px; }
    .hr { border-top: 5px solid transparent; border-bottom: 5px solid transparent; border-left: 6px solid #8a8a8a; margin-left: auto; margin-right: 6px; }

    /* status */
    .status { height: 30px; margin-top: 8px; background: #444; display: flex; align-items: center; padding-left: 5px; flex: none; color: #eee; white-space: nowrap; }
    .status .msgtxt { margin-left: 10px; font-size: 14.2px; }
    .status .r { margin-left: auto; display: flex; align-items: center; }
    .up2 { width: 0; height: 0; border: 5px solid transparent; border-bottom: 5px solid #eee; border-top: 0; flex: none; }
    .s1 { margin-right: 11px; }
    .s2 { margin-left: 27px; margin-right: 9px; }
    .s3 { margin-left: 27px; margin-right: 8px; }
    .s4 { margin-left: 36px; margin-right: 7px; }
    .s5 { margin-left: 26px; margin-right: 21px; }
    .w36 { width: 36px; } .w42 { width: 42px; } .w88 { width: 88px; }
  `;

  private slots(list: [string, number][]) {
    return list.map(([n, w]) => html`<span class="slot" style="width:${w}px">
      ${n === '^' ? html`<i class="caret dim"></i>` : n === '^w' ? html`<i class="caret"></i>` : n === '|' ? html`<i class="tsep"></i>` : ic(n, 19)}
    </span>`);
  }

  private row(r: Row) {
    if (r.head) {
      return html`<div class="row head ${r.gap ? 'gap' : ''} ${r.dim ? 'dim' : ''}"><i class="tri ${r.dim ? 'right' : ''}"></i>${r.label}</div>`;
    }
    return html`<div class="row item">${ic(r.icon!, 20)}<span>${r.label}</span></div>`;
  }

  render() {
    return html`<div class="app">
      <div class="title">
        <div class="logo">${ic('vslogo', 26)}</div>
        <div class="menu">${menu.map((m) => html`<span>${m}</span>`)}</div>
        <i class="vsep"></i>
        <div class="search">${ic('searchi', 18)}<span>Search</span><i class="caret"></i></div>
        <div class="project">Integration Services Faculty Project</div>
        <div class="avatar">MS</div>
        <div class="wbtn first"><svg width="14" height="14" viewBox="0 0 14 14"><path d="M1 7h12" stroke="#ccc"/></svg></div>
        <div class="wbtn"><svg width="14" height="14" viewBox="0 0 14 14"><path d="M4 3V1h8v9h-2M2 3h8v10H2z" fill="none" stroke="#ccc"/></svg></div>
        <div class="wbtn"><svg width="14" height="14" viewBox="0 0 14 14"><path d="M1 1l12 12M13 1 1 13" stroke="#ccc"/></svg></div>
      </div>

      <div class="tools">
        ${this.slots(tbA)}
        <span class="sp8"></span>
        <div class="combo w80">Develop<i class="caret"></i></div>
        <span class="sp7"></span>
        <div class="combo w138">Default<i class="caret"></i></div>
        <span class="slot" style="width:34px">${ic('play', 18)}</span>
        <span class="starttxt">Start</span>
        <span class="slot" style="width:10px"><i class="caret"></i></span>
        <span class="slot" style="width:28px">${ic('playo', 18)}</span>
        <span class="sp5"></span>
        <div class="combo w160"><i class="caret dim"></i></div>
        <span class="slot" style="width:16px"><i class="tsep"></i></span>
        <span class="slot" style="width:26px">${ic('findfolder', 20)}</span>
        <span class="sp5"></span>
        <div class="combo w231"><i class="caret"></i></div>
        <span class="slot" style="width:11px"><i class="tsep"></i></span>
        ${this.slots(tbB)}
        <span class="slot" style="width:15px"><i class="tsep"></i></span>
        <span class="slot" style="width:18px">${ic('playd', 18)}</span>
        <span class="startup">Select Startup Item</span>
        <span class="slot" style="width:20px"><i class="caret dim"></i></span>
        <span class="slot" style="width:14px">${ic('overflow', 14)}</span>
        <span class="slot" style="width:56px"></span>
        <div class="lsh">${ic('liveshare', 20)}<span>Live Share</span></div>
        <span class="slot" style="width:24px">${ic('feedback', 20)}</span>
      </div>

      <div class="main">
        <div class="panel">
          <div class="box">
            <div class="phead"><span class="ttl">SSIS Toolbox</span>
              <span class="slot"><i class="caret"></i></span>
              <span class="slot">${ic('pin', 16)}</span>
              <span class="slot">${ic('x', 14)}</span>
            </div>
            <div class="psearch"><span>Search SSIS Toolbox</span>${ic('mag', 20)}</div>
            <div class="pdiv"></div>
            <div class="listwrap">
              <div class="list">${toolbox.map((r) => this.row(r))}</div>
              <div class="vbar"><i class="up"></i><div class="thumb"></div><i class="down"></i></div>
            </div>
            <div class="hsplit"></div>
            <div class="info">
              <div class="infohead">${ic('chevcircle', 24)}<span>Information...</span><span class="help">${ic('info', 17)}</span></div>
              <div class="infotxt">Drag a toolbox item to SSIS<br />Designer to use it.</div>
              <div class="inforule"></div>
            </div>
          </div>
          <div class="ptabs"><div class="ptab">SSIS Toolbox</div><div class="ptab off">Server Explorer</div></div>
        </div>

        <div class="doc">
          <div class="tabs">
            <div class="tab"><span class="name">Package.dtsx [Design]</span>
              <span class="slot">${ic('pinh', 13)}</span><span class="slot">${ic('x', 13)}</span></div>
            <div class="right"><i class="caret"></i>${ic('gear', 15)}</div>
          </div>
          <div class="dbody">
            <div class="dtabs">
              <div class="dtab">${ic('cflow', 20)}<span>Control Flow</span></div>
              <div class="dtab on">${ic('dflow', 20)}<span>Data Flow</span></div>
              <div class="dtab m2">${ic('params', 19)}<span>Parameters</span></div>
              <div class="dtab m3">${ic('ehandler', 19)}<span>Event Handlers</span></div>
              <div class="dtab m3">${ic('pexplore', 20)}<span>Package Explor...</span></div>
              <div class="end">${ic('params', 20)}${ic('gridf', 20)}</div>
            </div>
            <div class="task"><span class="lab">Data Flow Task:</span>
              <div class="taskbox">${ic('dflow', 19)}<span>STG</span><span class="taskbtn"><i class="caret"></i></span></div>
            </div>
            <div class="vsplit"></div>
            <div class="canvas">
              <svg class="wires" width="1471" height="760">
                ${links.map(([x, a, b]) => svg`<line x1=${x - OX} y1=${a - OY} x2=${x - OX} y2=${b - OY - 6} stroke="#5a78a3" stroke-width="2.200"/>
                  <polygon points="${x - OX - 5},${b - OY - 8} ${x - OX + 5},${b - OY - 8} ${x - OX},${b - OY}" fill="#5a78a3"/>`)}
              </svg>
              ${nodes.map(([t, i, x1, y1, x2, y2]) => html`<div class="node" style="left:${x1 - OX}px;top:${y1 - OY}px;width:${x2 - x1}px;height:${y2 - y1}px">
                <svg width="40" height="40" viewBox="0 0 40 40">${icons[i]}</svg>${t}</div>`)}
              ${labels.map(([t, x, y]) => html`<span class="wlabel" style="left:${x - OX}px;top:${y - OY}px">${t}</span>`)}
              <div class="zoombox">
                <div class="zlab">110%</div>
                <div class="zslide"><i class="ztrack"></i><i class="zticks"></i><i class="zthumb"></i></div>
                <div class="zfit">${ic('fit', 16)}</div>
              </div>
            </div>
            <div class="conn">
              <div class="ghost">Mjolo OwnerdrawTabControl</div>
              <div class="conntab">Connection Managers</div>
            </div>
          </div>
        </div>

        <div class="git">
          <div class="phead"><span class="ttl">Git Changes...</span>
            <span class="slot"><i class="caret"></i></span>
            <span class="slot">${ic('pin', 16)}</span>
            <span class="slot">${ic('x', 14)}</span>
          </div>
          <div class="gtools"><i class="gbar"></i>
            <span class="slot">${ic('fetch', 20)}</span><span class="slot">${ic('pull', 20)}</span>
            <span class="slot">${ic('push', 20)}</span><span class="slot">${ic('sync', 20)}</span>
            <span class="slot dots">···</span>
          </div>
          <div class="gout">${ic('arrows', 18)}<span>0 outgoing / 0 in...</span></div>
          <div class="msg">Enter a message<br />&lt;Required&gt;</div>
          <div class="commitrow">
            <div class="commit">Commit All<i class="div"></i><i class="caret"></i></div>
            <i class="check"></i><span>A</span>
          </div>
          <div class="tree t0"><i class="tri"></i><span>Changes (2)</span><span class="add"><i class="plus"></i><i class="dot"></i></span></div>
          <div class="tree t1"><i class="tri"></i>${ic('repo', 18)}<span class="soft">D:\\fca...</span></div>
          <div class="tree t2"><i class="tri"></i>${ic('folder', 18)}<span class="soft">Int...</span></div>
          <div class="tree t3">${ic('vsfile', 18)}<span>...</span></div>
          <div class="tree t4"><span class="mdw">${ic('mdfile', 18)}<b>M↓</b></span><span class="soft">RE...</span></div>
          <div class="tree t0 stash"><i class="tri open"></i><span>Stashes</span></div>
          <div class="hbar"><i class="hl"></i><i class="hth"></i><i class="hr"></i></div>
        </div>
      </div>

      <div class="status">
        ${ic('comment', 20)}
        <span class="msgtxt">Zoom Change: 110%</span>
        <div class="r">
          <span class="s1">${ic('arrows', 17)}</span>
          <span class="w36">0 / 0</span><i class="up2"></i>
          <span class="s2">${ic('pencil', 16)}</span><span>2</span>
          <span class="s3">${ic('branch', 19)}</span><span class="w42">main</span><i class="up2"></i>
          <span class="s4">${ic('repoup', 20)}</span><span class="w88">SSIS-project</span><i class="up2"></i>
          <span class="s5">${ic('bell', 19)}</span>
        </div>
      </div>
    </div>`;
  }
}
